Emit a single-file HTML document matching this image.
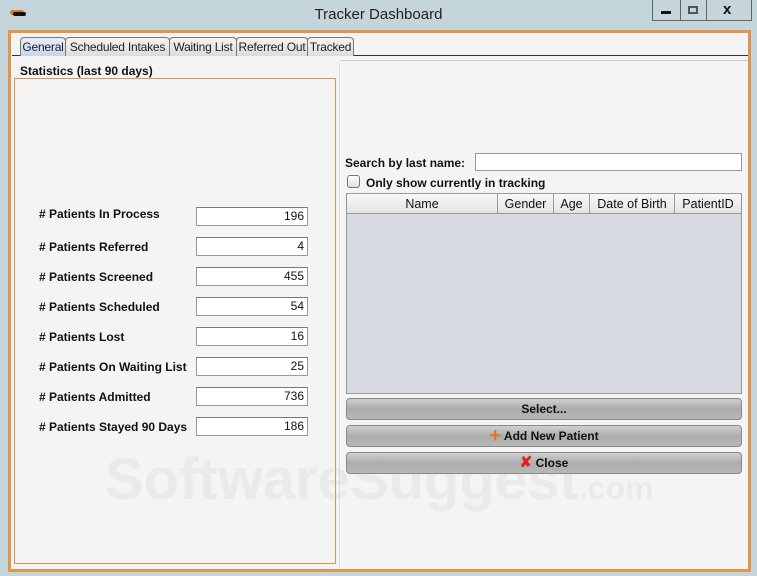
<!DOCTYPE html>
<html><head><style>
*{box-sizing:border-box;margin:0;padding:0}
body{width:757px;height:576px;background:#c4d5db;font-family:"Liberation Sans",sans-serif;font-size:12px;position:relative;overflow:hidden;color:#111}
.a{position:absolute;white-space:nowrap}
.title{left:0;width:757px;top:6px;text-align:center;font-size:15px;color:#222}
.frame{left:8px;top:30px;width:743px;height:542px;border:3px solid #e0954f;background:#f4f4f4}
.tab{top:37px;height:19px;border:1px solid #777;border-bottom:none;border-radius:4px 4px 0 0;background:linear-gradient(#f4f4f4,#dcdcdc);font-size:12px;line-height:18px;text-align:center;color:#222;overflow:hidden;letter-spacing:-0.2px}
.lbl{font-weight:bold;font-size:12px;left:39px}
.inp{left:196px;width:112px;height:19px;border:1px solid #999;border-top-color:#777;background:#fff;text-align:right;padding-right:3px;line-height:17px;font-size:12px}
.btn{left:346px;width:396px;height:22px;border:1px solid #888;border-radius:4px;background:linear-gradient(#d0d0d0,#acacac 50%,#b8b8b8);text-align:center;font-weight:bold;line-height:20px;font-size:12px}
.th{top:194px;height:20px;border-right:1px solid #999;text-align:center;line-height:20px;font-size:12.5px}
</style></head><body>
<div class="a" style="left:10px;top:10px;width:14px;height:5px;background:#e07820;border-radius:3px"></div>
<div class="a" style="left:13px;top:12px;width:13px;height:4px;background:#111;border-radius:2px"></div>
<div class="a title">Tracker Dashboard</div>
<div class="a" style="left:652px;top:0;width:100px;height:21px;border:1px solid #666;border-top:none"></div>
<div class="a" style="left:680px;top:0;width:1px;height:21px;background:#666"></div>
<div class="a" style="left:706px;top:0;width:1px;height:21px;background:#666"></div>
<div class="a" style="left:661px;top:11px;width:10px;height:3px;background:#111"></div>
<div class="a" style="left:688px;top:6px;width:10px;height:8px;border:2px solid #555"></div>
<div class="a" style="left:723px;top:1px;font-weight:bold;font-size:15px">x</div>
<div class="a frame"></div>
<div class="a" style="left:12px;top:55px;width:736px;height:1px;background:#333"></div>
<div class="a tab" style="left:20px;width:46px;background:linear-gradient(#e8eef8,#c8d4e8);color:#223">General</div>
<div class="a tab" style="left:65px;width:105px">Scheduled Intakes</div>
<div class="a tab" style="left:169px;width:68px">Waiting List</div>
<div class="a tab" style="left:236px;width:72px">Referred Out</div>
<div class="a tab" style="left:307px;width:47px">Tracked</div>
<div class="a" style="left:340px;top:60px;width:408px;height:1px;background:#ccc"></div>
<div class="a" style="left:12px;top:62px;width:328px;height:506px;background:#f4f4f4;border-right:1px solid #e0e0e0"></div>
<div class="a" style="left:20px;top:64px;font-weight:bold;font-size:12px">Statistics (last 90 days)</div>
<div class="a" style="left:14px;top:78px;width:322px;height:486px;border:1px solid #e0954f"></div>
<div class="a lbl" style="top:207px"># Patients In Process</div><div class="a inp" style="top:207px">196</div>
<div class="a lbl" style="top:240px"># Patients Referred</div><div class="a inp" style="top:237px">4</div>
<div class="a lbl" style="top:270px"># Patients Screened</div><div class="a inp" style="top:267px">455</div>
<div class="a lbl" style="top:300px"># Patients Scheduled</div><div class="a inp" style="top:297px">54</div>
<div class="a lbl" style="top:330px"># Patients Lost</div><div class="a inp" style="top:327px">16</div>
<div class="a lbl" style="top:360px"># Patients On Waiting List</div><div class="a inp" style="top:357px">25</div>
<div class="a lbl" style="top:390px"># Patients Admitted</div><div class="a inp" style="top:387px">736</div>
<div class="a lbl" style="top:420px"># Patients Stayed 90 Days</div><div class="a inp" style="top:417px">186</div>
<div class="a" style="left:345px;top:156px;font-weight:bold">Search by last name:</div>
<div class="a" style="left:475px;top:153px;width:267px;height:18px;border:1px solid #999;background:#fff"></div>
<div class="a" style="left:347px;top:175px;width:13px;height:13px;border:1px solid #777;border-radius:3px;background:linear-gradient(#fff,#ddd)"></div>
<div class="a" style="left:366px;top:176px;font-weight:bold">Only show currently in tracking</div>
<div class="a" style="left:346px;top:193px;width:396px;height:201px;border:1px solid #999;background:#d8dbe2"></div>
<div class="a" style="left:347px;top:194px;width:394px;height:20px;background:linear-gradient(#f8f8f8,#e4e4e4);border-bottom:1px solid #999"></div>
<div class="a th" style="left:347px;width:151px">Name</div>
<div class="a th" style="left:498px;width:56px">Gender</div>
<div class="a th" style="left:554px;width:36px">Age</div>
<div class="a th" style="left:590px;width:85px">Date of Birth</div>
<div class="a th" style="left:675px;width:66px;border-right:none">PatientID</div>
<div class="a" style="left:105px;top:446px;font-size:58px;font-weight:bold;color:rgba(180,180,180,.14);letter-spacing:0px">SoftwareSuggest<span style="font-size:32px">.com</span></div>
<div class="a btn" style="top:398px">Select...</div>
<div class="a btn" style="top:425px"><span style="color:#e07820;font-size:20px;line-height:18px;vertical-align:-2px">+</span> Add New Patient</div>
<div class="a btn" style="top:452px"><span style="color:#e02020;font-size:15px">✘</span> Close</div>
</body></html>
